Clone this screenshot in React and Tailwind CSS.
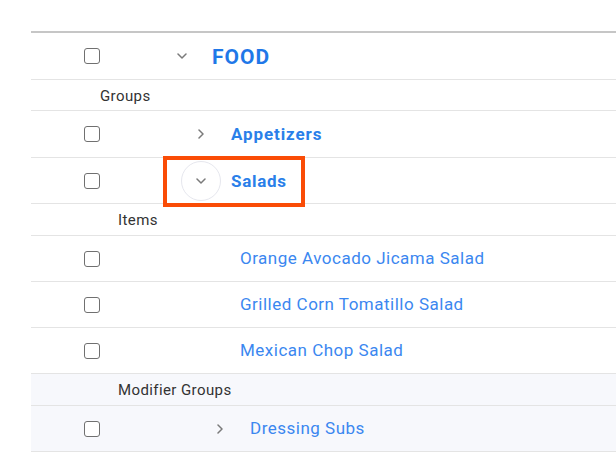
import React from 'react';

// menu tree: category -> groups -> items / modifier groups
const FONT = { fontFamily: 'Roboto, "Liberation Sans", Arial, sans-serif' };

function Checkbox() {
    return <div className="w-[16px] h-[16px] rounded-[3px] border-[1.5px] border-[#707070] bg-white shrink-0" />;
}

function ChevronDown() {
    return (
        <svg width="10" height="6" viewBox="0 0 10 6" fill="none">
            <polyline points="1,1 5,5 9,1" stroke="#7a7a7a" strokeWidth="1.5" strokeLinecap="round" strokeLinejoin="round" />
        </svg>
    );
}

function ChevronRight() {
    return (
        <svg width="6" height="10" viewBox="0 0 6 10" fill="none">
            <polyline points="1,1 5,5 1,9" stroke="#7a7a7a" strokeWidth="1.5" strokeLinecap="round" strokeLinejoin="round" />
        </svg>
    );
}

function SubHeader({ label, indent, height, shaded }) {
    return (
        <div
            className={`flex items-center border-b border-[#e4e4e4] text-[15px] tracking-[0.4px] text-[#333] ${shaded ? 'bg-[#f7f8fc]' : 'bg-white'}`}
            style={{ height }}
        >
            <span className={`pt-[2px] ${indent}`}>{label}</span>
        </div>
    );
}

function Row({ children, height = 46, shaded }) {
    return (
        <div
            className={`flex items-center border-b border-[#e4e4e4] pl-[53px] ${shaded ? 'bg-[#f7f8fc]' : 'bg-white'}`}
            style={{ height }}
        >
            <Checkbox />
            {children}
        </div>
    );
}

export default function App() {
    const items = ['Orange Avocado Jicama Salad', 'Grilled Corn Tomatillo Salad', 'Mexican Chop Salad'];

    return (
        <div className="w-[616px] h-[461px] bg-white pt-[31px] pl-[31px] overflow-hidden" style={FONT}>
            <div className="border-t-2 border-[#c6c6c6]">
                <Row height={47}>
                    <div className="ml-[62px] w-[40px] flex justify-center">
                        <ChevronDown />
                    </div>
                    <span className="ml-[10px] pt-[3px] text-[21px] font-bold tracking-[1px] text-[#1f78e8]">FOOD</span>
                </Row>

                <SubHeader label="Groups" indent="pl-[69px]" height={31} />

                <Row height={47}>
                    <div className="ml-[81px] w-[40px] flex justify-center">
                        <ChevronRight />
                    </div>
                    <span className="ml-[10px] pt-[2px] text-[17px] font-bold tracking-[0.9px] text-[#2a7fe9]">Appetizers</span>
                </Row>

                <Row height={46}>
                    <div className="relative ml-[81px] flex items-center">
                        <div className="w-[40px] h-[40px] rounded-full border border-[#e6e7ee] flex items-center justify-center">
                            <ChevronDown />
                        </div>
                        <span className="ml-[10px] pt-[2px] text-[17px] font-bold tracking-[0.7px] text-[#2a7fe9]">Salads</span>
                        <div className="absolute left-[-18px] right-[-18px] top-[-5px] bottom-[-6px] border-4 border-[#fa4c06]" />
                    </div>
                </Row>

                <SubHeader label="Items" indent="pl-[87px]" height={32} />

                {items.map((name) => (
                    <Row key={name} height={46}>
                        <span className="ml-[140px] pt-[1px] text-[17px] tracking-[0.5px] text-[#3b87f0]">{name}</span>
                    </Row>
                ))}

                <SubHeader label="Modifier Groups" indent="pl-[87px]" height={32} shaded />

                <Row height={46} shaded>
                    <div className="ml-[100px] w-[40px] flex justify-center">
                        <ChevronRight />
                    </div>
                    <span className="ml-[10px] pt-[1px] text-[17px] tracking-[0.5px] text-[#3b87f0]">Dressing Subs</span>
                </Row>
            </div>
        </div>
    );
}
